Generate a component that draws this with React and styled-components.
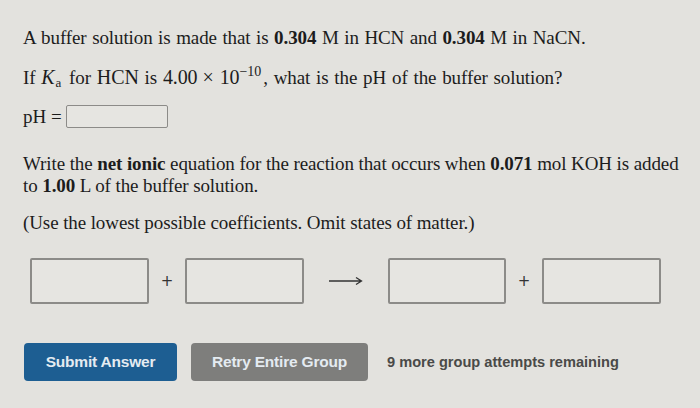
import React from 'react'
import styled, { createGlobalStyle } from 'styled-components'

const GlobalStyle = createGlobalStyle`
  html, body {
    margin: 0;
    padding: 0;
    background: #e3e2de;
  }
`

const Page = styled.div`
  width: 700px;
  height: 408px;
  box-sizing: border-box;
  padding: 27px 0 0 23px;
  background: #e3e2de;
  color: #1c1c1c;
  font-family: "Liberation Serif", "Times New Roman", serif;
  font-size: 19px;
  line-height: 22px;
  overflow: hidden;
`

const Para = styled.p`
  margin: ${p => p.top || 0}px 0 0 0;
  max-width: 666px;
  letter-spacing: -0.1px;
  word-spacing: ${p => p.ws || 0}px;
`

// inline math: K_a and the power of ten
const Math = styled.span`
  font-size: 20px;
  word-spacing: 1px;
`

const Times = styled.span`
  margin: 0 6px 0 5px;
`

const Sup = styled.sup`
  font-size: 14px;
  line-height: 0;
  vertical-align: 8px;
  margin-right: 2px;
`

const Sub = styled.sub`
  font-size: 13px;
  line-height: 0;
  vertical-align: -3px;
  margin: 0 2px 0 1px;
`

const AnswerRow = styled.div`
  display: flex;
  align-items: center;
  margin-top: 16px;
  height: 23px;
`

const Label = styled.span`
  margin-right: 4px;
`

const Input = styled.div`
  box-sizing: border-box;
  width: ${p => p.w}px;
  height: ${p => p.h}px;
  border: ${p => p.thick ? 2 : 1.5}px solid #8c8b88;
  border-radius: 2px;
  background: #e6e5e1;
`

const Equation = styled.div`
  display: flex;
  align-items: center;
  margin: 24px 0 0 7px;
  height: 46px;
`

const Plus = styled.span`
  width: 36px;
  text-align: center;
  font-family: "DejaVu Sans", sans-serif;
  font-size: 15px;
  color: #333;
`

const Arrow = styled.svg`
  margin: 0 25px;
`

const Actions = styled.div`
  display: flex;
  align-items: center;
  margin: 39px 0 0 1px;
  font-family: "Liberation Sans", Arial, sans-serif;
  font-weight: bold;
`

const Button = styled.button`
  box-sizing: border-box;
  width: ${p => p.w}px;
  height: 38px;
  margin-right: 14px;
  border: none;
  border-radius: 4px;
  background: ${p => p.bg};
  color: #e4ebf1;
  font: inherit;
  font-size: 15.5px;
  letter-spacing: -0.2px;
`

const Remaining = styled.span`
  margin-left: 5px;
  font-size: 14.6px;
  color: #4a4a48;
`

export default function App() {
  return (
    <>
      <GlobalStyle />
      <Page>
        <Para ws={0.9}>
          A buffer solution is made that is <b>0.304</b> M in HCN and <b>0.304</b> M in NaCN.
        </Para>
        <Para top={17} ws={1.2}>
          If <Math><i>K</i><Sub>a</Sub></Math> for <Math>HCN</Math> is{' '}
          <Math>4.00<Times>×</Times>10<Sup>−10</Sup></Math>, what is the pH of the buffer solution?
        </Para>
        <AnswerRow>
          <Label>pH =</Label>
          <Input w={102} h={23} />
        </AnswerRow>
        <Para top={25}>
          Write the <b>net ionic</b> equation for the reaction that occurs when <b>0.071</b> mol KOH is added
          <br />
          to <b>1.00</b> L of the buffer solution.
        </Para>
        <Para top={15}>(Use the lowest possible coefficients. Omit states of matter.)</Para>
        <Equation>
          <Input w={119} h={46} thick />
          <Plus>+</Plus>
          <Input w={119} h={46} thick />
          <Arrow width="34" height="10" viewBox="0 0 34 10">
            <path d="M0 5 H32 M27 1.5 L32.5 5 L27 8.5" fill="none" stroke="#333" strokeWidth="1.3" />
          </Arrow>
          <Input w={118} h={46} thick />
          <Plus>+</Plus>
          <Input w={119} h={46} thick />
        </Equation>
        <Actions>
          <Button w={153} bg="#1d5e92">Submit Answer</Button>
          <Button w={177} bg="#7e7e7c">Retry Entire Group</Button>
          <Remaining>9 more group attempts remaining</Remaining>
        </Actions>
      </Page>
    </>
  )
}
